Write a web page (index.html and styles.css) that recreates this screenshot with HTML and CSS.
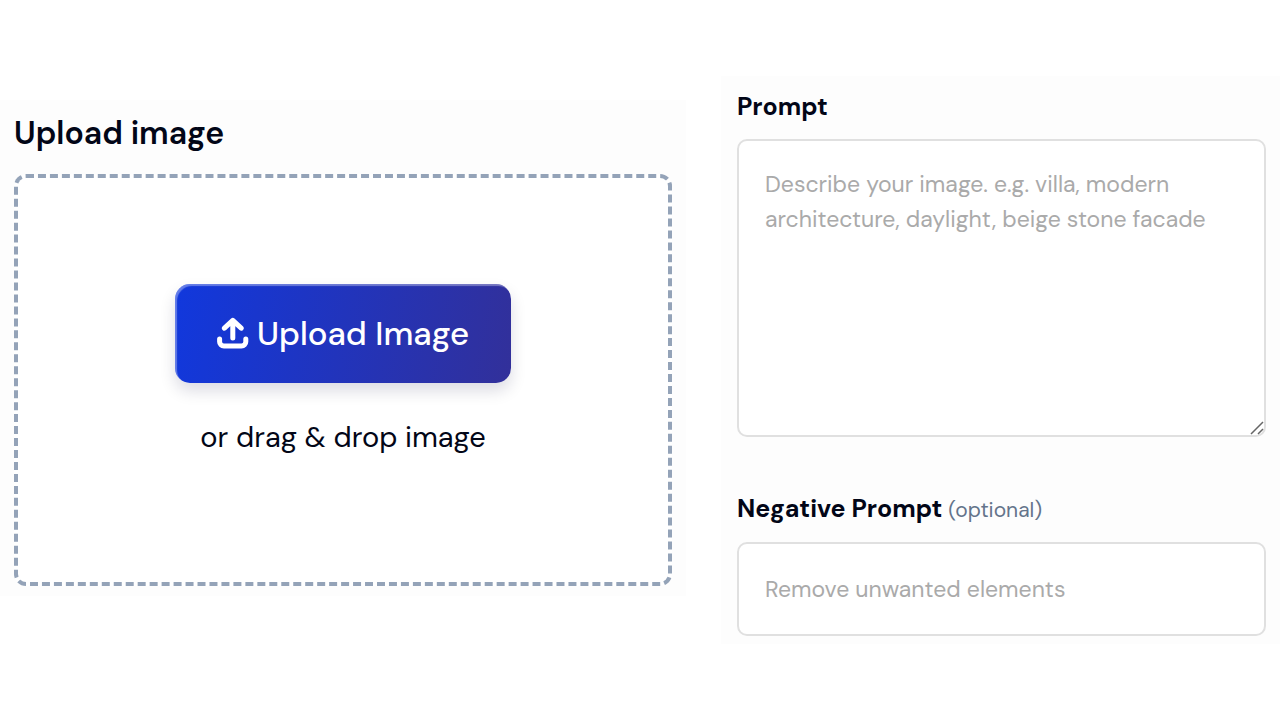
FILE: index.html
```html
<!DOCTYPE html>
<html lang="en">
<head>
  <meta charset="UTF-8" />
  <meta name="viewport" content="width=device-width, initial-scale=1.0" />
  <title>Upload image</title>
  <link rel="stylesheet" href="styles.css">
</head>
<body>
  <main class="container">
    <section class="panel upload-panel">
      <h2 class="upload-title">Upload image</h2>
      <div class="dropzone">
        <button type="button" class="upload-btn">
          <svg class="upload-icon" viewBox="0 0 32 32" fill="none" stroke="#fff" stroke-linecap="round" stroke-linejoin="round" aria-hidden="true">
            <path stroke-width="5" d="M2.6 22v2.7a4.3 4.3 0 0 0 4.3 4.3h17.6a4.3 4.3 0 0 0 4.3-4.3V22" />
            <path stroke-width="5" d="M15.8 21V4M7.4 11.2l8.4-7.8 8.4 7.8" />
          </svg>
          <span>Upload Image</span>
        </button>
        <p class="drop-text">or drag &amp; drop image</p>
      </div>
    </section>

    <form class="panel prompt-panel">
      <label class="field-label" for="prompt">Prompt</label>
      <div class="textarea-wrap">
        <textarea id="prompt" class="field" placeholder="Describe your image. e.g. villa, modern architecture, daylight, beige stone facade"></textarea>
        <svg class="grip" viewBox="0 0 14 14" stroke="#666" stroke-width="1.5" aria-hidden="true">
          <path d="M1 13L13 1M8 13l5-5" />
        </svg>
      </div>

      <label class="field-label" for="negative">Negative Prompt <span class="optional">(optional)</span></label>
      <input type="text" id="negative" class="field" placeholder="Remove unwanted elements">
    </form>
  </main>
</body>
</html>
```
FILE: styles.css
```css
* {
  box-sizing: border-box;
}

body {
  margin: 0;
  background-color: #fff;
  color: #020617;
  font-family: "DM Sans", "Open Sans", sans-serif;
}

.container {
  display: grid;
  grid-template-columns: 686fr 559fr;
  column-gap: 35px;
  align-items: start;
  padding-top: 76px;
}

.panel {
  background-color: #fdfdfd;
}

/* upload */
.upload-panel {
  margin-top: 24px;
  padding: 12px 14px 10px;
}

.upload-title {
  margin: 0 0 20px;
  font-size: 32px;
  line-height: 42px;
  font-weight: 600;
}

.dropzone {
  display: flex;
  flex-direction: column;
  align-items: center;
  justify-content: center;
  gap: 32px;
  min-height: 412px;
  padding-bottom: 18px;
  background-color: #fff;
  border: 4px dashed #94a3b8;
  border-radius: 12px;
}

.upload-btn {
  display: flex;
  align-items: center;
  gap: 8px;
  height: 99px;
  padding: 0 42px;
  border: none;
  border-radius: 15px;
  background: linear-gradient(100deg, #1138dd, #32309a);
  box-shadow: inset 2px 2px 1px rgba(255, 255, 255, 0.35), 0 8px 16px rgba(2, 6, 60, 0.14);
  color: #fff;
  font-family: inherit;
  font-size: 33px;
  font-weight: 500;
  cursor: pointer;
}

.upload-icon {
  width: 32px;
  height: 32px;
}

.drop-text {
  margin: 0;
  font-size: 29px;
  line-height: 44px;
}

/* prompt fields */
.prompt-panel {
  padding: 13px 14px 8px 16px;
}

.field-label {
  display: block;
  margin-bottom: 14px;
  font-size: 25px;
  line-height: 36px;
  font-weight: 700;
}

.optional {
  color: #64748b;
  font-size: 21px;
  font-weight: 400;
}

.field {
  display: block;
  width: 100%;
  height: 94px;
  padding: 0 26px;
  background-color: #fff;
  border: 2px solid #e0e0e0;
  border-radius: 10px;
  color: #020617;
  font-family: inherit;
  font-size: 23px;
  line-height: 35px;
}

.field::placeholder {
  color: #aaa;
}

.textarea-wrap {
  position: relative;
  margin-bottom: 54px;
}

textarea.field {
  height: 298px;
  padding-top: 26px;
  resize: none;
}

.grip {
  position: absolute;
  right: 2px;
  bottom: 2px;
  width: 14px;
  height: 14px;
}
```
